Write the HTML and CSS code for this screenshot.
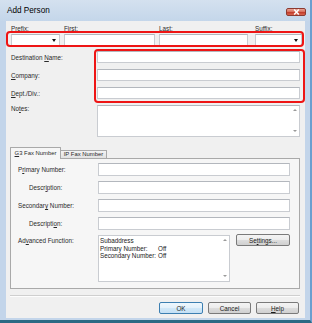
FILE: index.html
```html
<!DOCTYPE html>
<html>
<head>
<meta charset="utf-8">
<title>Add Person</title>
<link rel="stylesheet" href="styles.css">
</head>
<body>
<div class="window">
  <div class="titlebar">
    <span class="title">Add Person</span>
    <span class="close"><svg width="9" height="6" viewBox="0 0 9 6"><path d="M2.2 0.6 L6.8 5.4 M6.8 0.6 L2.2 5.4" stroke="#fff" stroke-width="1.5"/></svg></span>
  </div>
  <div class="frame">
    <div class="client">
      <div class="name-row">
        <div class="ncol c-prefix"><span class="lbl">P<u>r</u>efix:</span><div class="field combo"><span class="arrow"></span></div></div>
        <div class="ncol c-first"><span class="lbl">First:</span><div class="field"></div></div>
        <div class="ncol c-last"><span class="lbl">Last:</span><div class="field"></div></div>
        <div class="ncol c-suffix"><span class="lbl">Suffix:</span><div class="field combo"><span class="arrow"></span></div></div>
      </div>

      <div class="form-grid">
        <span class="lbl">Destination <u>N</u>ame:</span><div class="field"></div>
        <span class="lbl"><u>C</u>ompany:</span><div class="field"></div>
        <span class="lbl"><u>D</u>ept./Div.:</span><div class="field"></div>
        <span class="lbl top">No<u>t</u>es:</span>
        <div class="field notes"><div class="vscroll"><span class="up"></span><span class="down"></span></div></div>
      </div>

      <div class="tabs">
        <div class="tabstrip">
          <span class="tab active"><u>G</u>3 Fax Number</span>
          <span class="tab">IP Fax Number</span>
        </div>
        <div class="panel">
          <div class="pgrid">
            <span class="lbl">P<u>r</u>imary Number:</span><div class="field tall"></div>
            <span class="lbl ind">Descr<u>i</u>ption:</span><div class="field tall"></div>
            <span class="lbl">Secondar<u>y</u> Number:</span><div class="field tall"></div>
            <span class="lbl ind">Descripti<u>o</u>n:</span><div class="field tall"></div>
            <span class="lbl top">Ad<u>v</u>anced Function:</span>
            <div class="adv">
              <div class="list">
                <div class="lines">
                  <div class="line">Subaddress</div>
                  <div class="line"><span class="key">Primary Number:</span><span>Off</span></div>
                  <div class="line"><span class="key">Secondary Number:</span><span>Off</span></div>
                </div>
                <div class="vscroll"><span class="up"></span><span class="down"></span></div>
              </div>
              <button class="btn settings">Se<u>t</u>tings...</button>
            </div>
          </div>
        </div>
      </div>

      <div class="sep"></div>

      <div class="buttons">
        <button class="btn ok">OK</button>
        <button class="btn">Cancel</button>
        <button class="btn"><u>H</u>elp</button>
      </div>
    </div>
  </div>
  <div class="mark mark-name"></div>
  <div class="mark mark-dest"></div>
</div>
</body>
</html>
```

FILE: styles.css
```css
* { box-sizing: border-box; }

html, body {
  margin: 0;
  padding: 0;
  background: #ffffff;
}

body {
  font-family: "Liberation Sans", Arial, sans-serif;
  font-size: 6.3px;
  color: #2a2a2a;
}

.window {
  position: relative;
  width: 312px;
  height: 323px;
  display: flex;
  flex-direction: column;
  background: #c3d5ea;
  border-right: 2px solid #6a9fcf;
  border-bottom: 3px solid #2b6a84;
  overflow: hidden;
}

.titlebar {
  height: 21px;
  flex: none;
  display: flex;
  align-items: flex-start;
  padding-left: 7px;
  background: linear-gradient(#d4e1ef, #c4d6ea);
}

.title {
  margin-top: 7px;
  font-size: 8.2px;
  line-height: 8px;
  color: #000;
}

.close {
  margin-left: auto;
  margin-right: 4px;
  margin-top: 8px;
  width: 20px;
  height: 8px;
  border: 1px solid #8d3a30;
  border-radius: 2px;
  background: linear-gradient(#e9a596 0%, #d9705e 45%, #c23c2b 55%, #d8654f 100%);
  display: flex;
  align-items: center;
  justify-content: center;
}

.close svg { display: block; }

.frame {
  flex: 1;
  display: flex;
  padding: 0 5px 2px 6px;
}

.client {
  flex: 1;
  background: #f0f0f0;
  padding: 3px 3px 0 5px;
  display: flex;
  flex-direction: column;
}

.lbl {
  line-height: 9px;
  white-space: nowrap;
}

u { text-decoration-thickness: 0.6px; text-underline-offset: 1px; }

/* name row */
.name-row {
  display: flex;
}

.ncol {
  display: flex;
  flex-direction: column;
}

.ncol .field { margin-top: 1px; }

.c-prefix { width: 49px; }
.c-first { width: 91px; margin-left: 4px; }
.c-last { width: 89px; margin-left: 4px; }
.c-suffix { width: 47px; margin-left: 7px; }

.field {
  height: 12px;
  background: #fff;
  border: 1px solid #c9ccd1;
  border-top-color: #b3b7bd;
}

.field.tall { height: 13px; }

.combo {
  display: flex;
  align-items: center;
  justify-content: flex-end;
  padding-right: 3px;
}

.arrow {
  width: 0;
  height: 0;
  border-left: 2.5px solid transparent;
  border-right: 2.5px solid transparent;
  border-top: 3px solid #111;
  margin-top: 1px;
}

/* destination grid */
.form-grid {
  margin-top: 5px;
  display: grid;
  grid-template-columns: 86px 203px;
  row-gap: 6px;
  align-items: center;
}

.lbl.top {
  align-self: start;
  margin-top: -1px;
}

.notes {
  height: 32px;
  display: flex;
  justify-content: flex-end;
}

.vscroll {
  width: 9px;
  display: flex;
  flex-direction: column;
  justify-content: space-between;
  align-items: center;
  padding: 3px 0 4px;
}

.vscroll .up, .vscroll .down {
  width: 0;
  height: 0;
  border-left: 2px solid transparent;
  border-right: 2px solid transparent;
}

.vscroll .up { border-bottom: 2px solid #9a9a9a; }
.vscroll .down { border-top: 2px solid #9a9a9a; }

/* tabs */
.tabs {
  margin-top: 10px;
  margin-left: -1px;
  width: 290px;
}

.tabstrip {
  display: flex;
  align-items: flex-end;
  height: 11px;
  position: relative;
  z-index: 1;
}

.tab {
  font-size: 5.9px;
  line-height: 7px;
  white-space: nowrap;
  display: flex;
  align-items: center;
  justify-content: center;
  border: 1px solid #a9a9a9;
  border-bottom: none;
}

.tab.active {
  width: 51px;
  height: 12px;
  margin-bottom: -1px;
  background: #f6f6f6;
  border-radius: 1px 1px 0 0;
  padding-bottom: 1px;
}

.tab:not(.active) {
  width: 46px;
  height: 8px;
  border-left: none;
  background: linear-gradient(#f3f3f3, #e2e2e2);
}

.panel {
  height: 131px;
  border: 1px solid #a9a9a9;
  background: #f6f6f6;
  padding: 4px 9px 6px 7px;
}

.pgrid {
  display: grid;
  grid-template-columns: 80px 192px;
  row-gap: 5px;
  align-items: center;
}

.lbl.ind { margin-left: 11px; }

.pgrid .lbl.top { margin-top: 1px; }

.adv {
  display: flex;
  align-items: flex-start;
}

.list {
  width: 132px;
  height: 47px;
  background: #fff;
  border: 1px solid #c9ccd1;
  display: flex;
  justify-content: space-between;
}

.lines {
  padding: 1px 0 0 1px;
}

.line {
  line-height: 7.5px;
  white-space: nowrap;
  display: flex;
  color: #1a1a1a;
}

.line .key { width: 58px; }

.btn {
  font-family: "Liberation Sans", Arial, sans-serif;
  font-size: 6.3px;
  color: #1a1a1a;
  height: 12px;
  padding: 0;
  border: 1px solid #7a7a7a;
  border-radius: 2px;
  background: linear-gradient(#f4f4f4 0%, #ececec 48%, #dddddd 52%, #d0d0d0 100%);
  line-height: 9px;
}

.settings {
  width: 54px;
  margin-left: 6px;
  margin-top: -1px;
}

.sep {
  margin-top: 6px;
  height: 2px;
  border-top: 1px solid #cfcfcf;
  border-bottom: 1px solid #fdfdfd;
  margin-left: -1px;
  width: 290px;
}

.buttons {
  margin-top: 5px;
  display: flex;
  justify-content: flex-end;
  gap: 5px;
  padding-right: 3px;
}

.buttons .btn { width: 43px; }
.buttons .btn.ok {
  width: 44px;
  border-color: #3c7fb1;
  background: linear-gradient(#eef7fd 0%, #e3f1fb 48%, #d1e8f8 52%, #c4e0f5 100%);
}

/* red annotation outlines (overlay) */
.mark {
  position: absolute;
  border: 2px solid #ee1515;
  border-radius: 4px;
  pointer-events: none;
}

.mark-name {
  left: 6px;
  top: 31px;
  width: 298px;
  height: 16px;
}

.mark-dest {
  left: 94px;
  top: 49px;
  width: 211px;
  height: 54px;
}
```
